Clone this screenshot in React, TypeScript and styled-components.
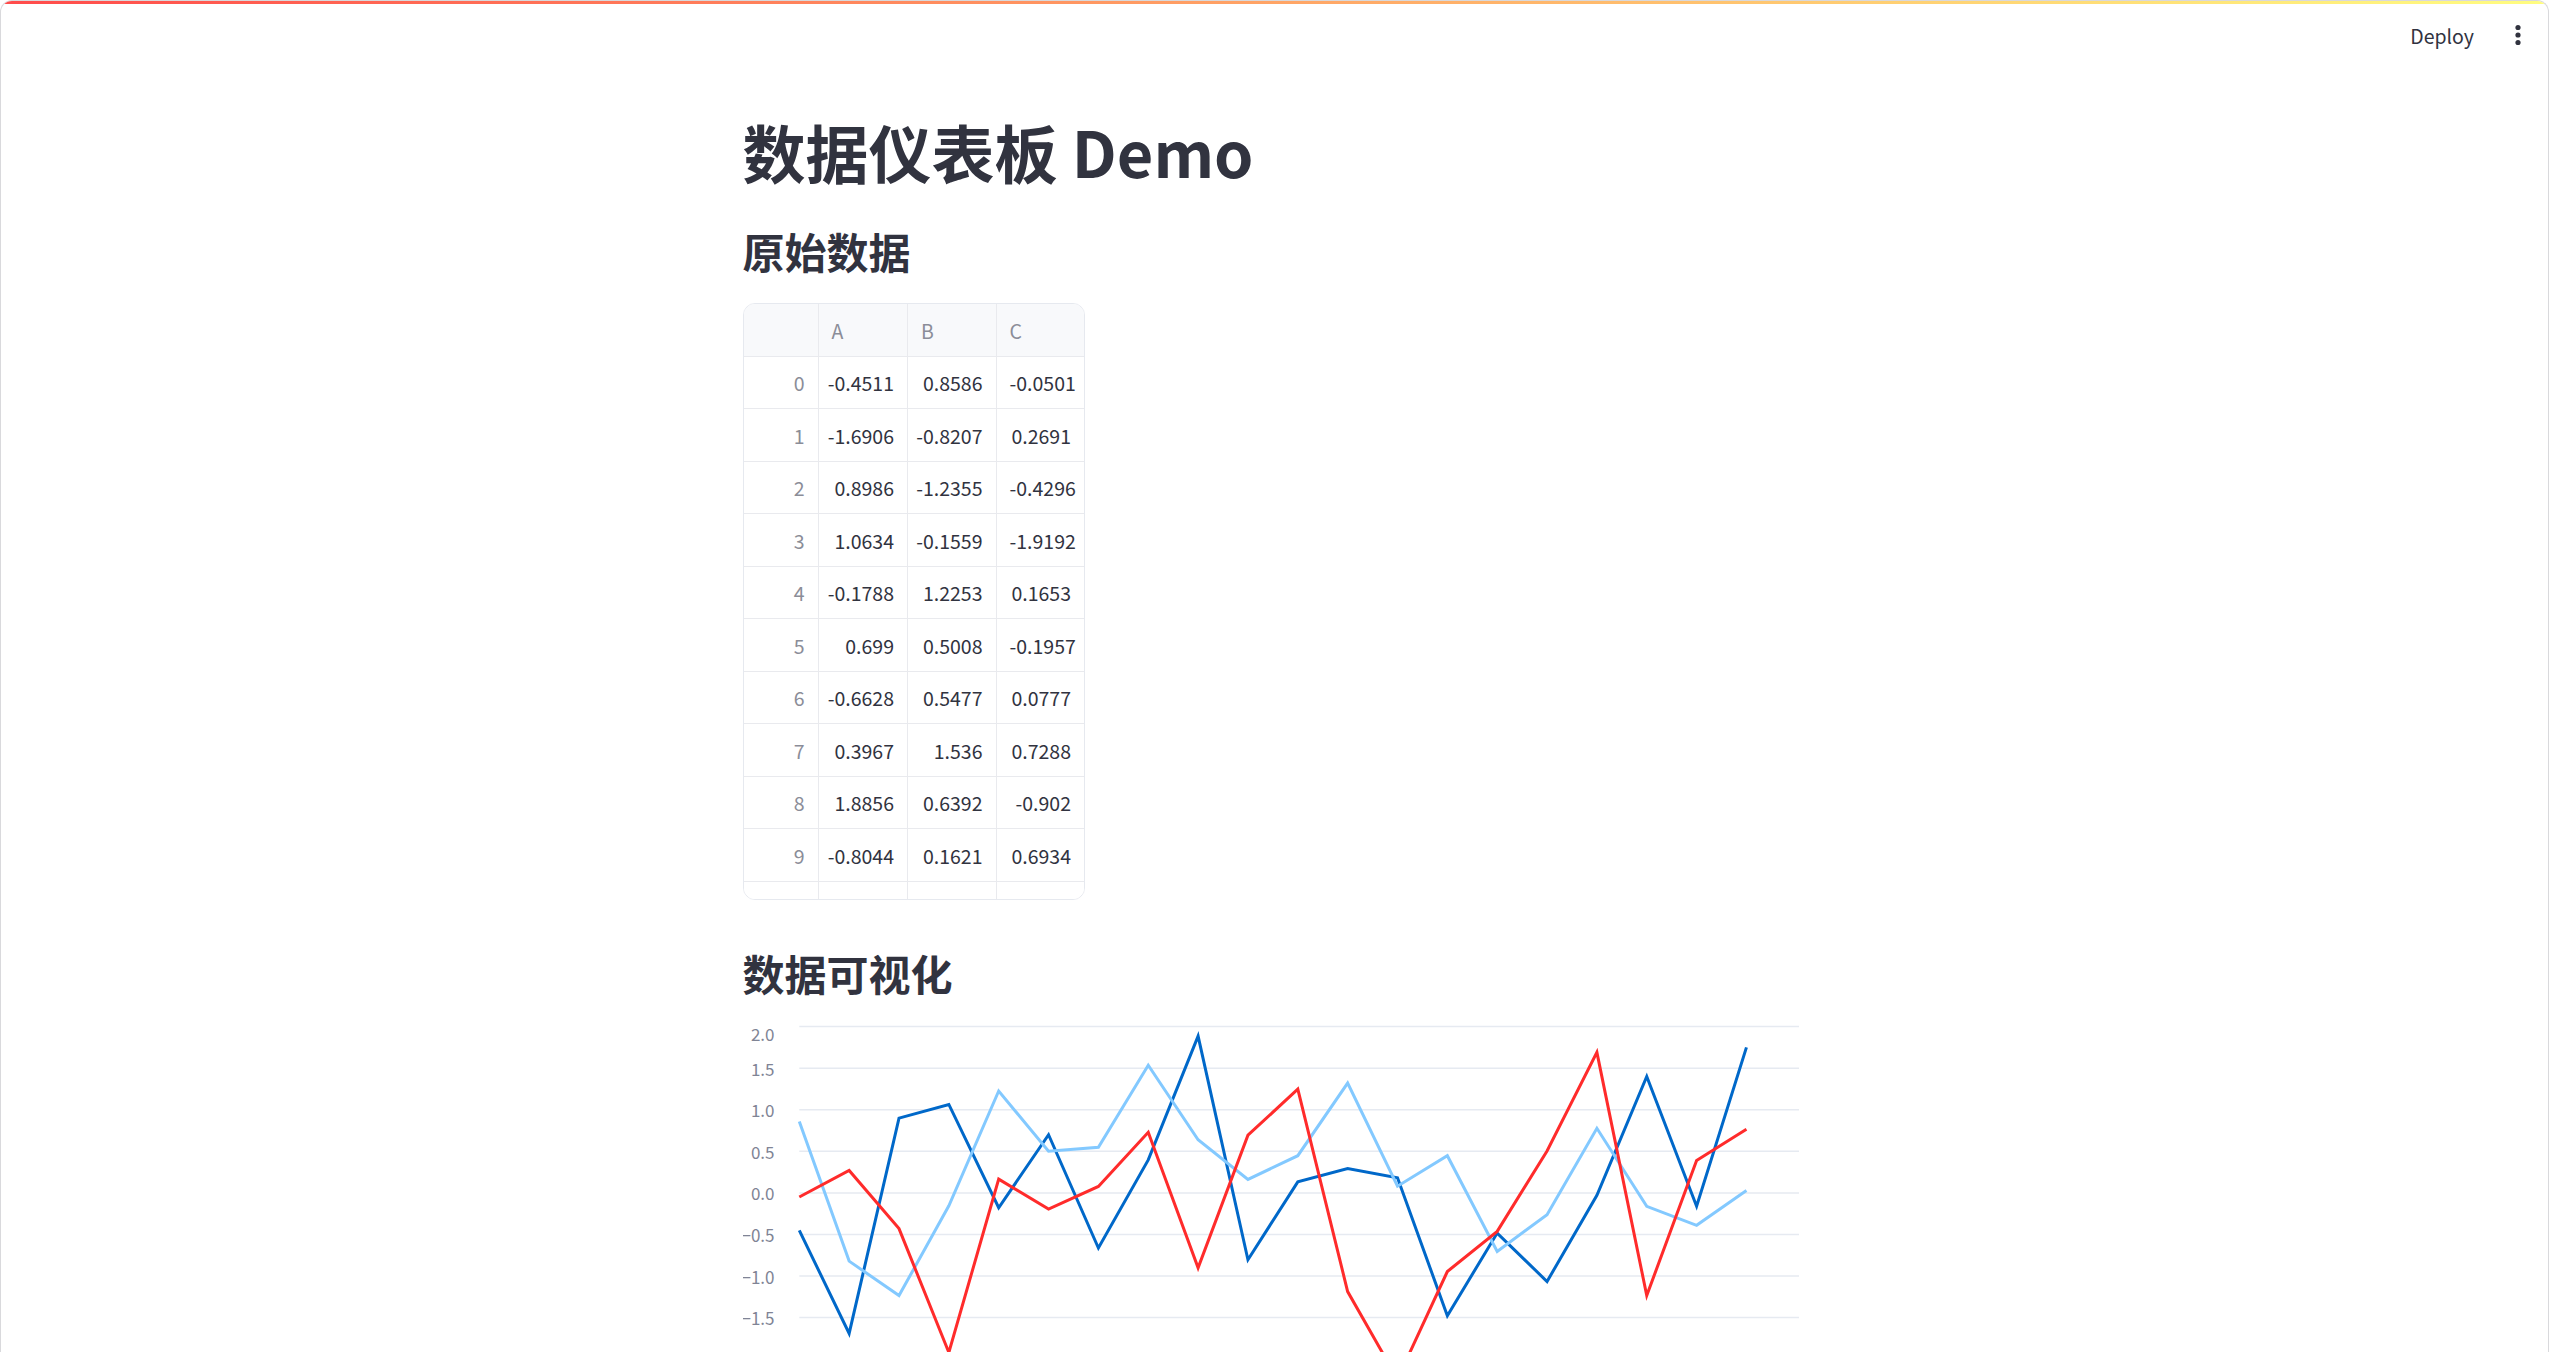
import styled, {createGlobalStyle} from 'styled-components';

const GlobalStyle = createGlobalStyle`
	html, body {
		margin: 0;
		padding: 0;
		background: #ffffff;
		overflow: hidden;
	}
	body {
		font-family: "Noto Sans CJK SC", "Noto Sans", sans-serif;
		color: #31333f;
	}
`;

// values read from the table / chart (rows 10-19 only show in the chart)
const colA = [-0.4511, -1.6906, 0.8986, 1.0634, -0.1788, 0.699, -0.6628, 0.3967, 1.8856, -0.8044, 0.133, 0.2941, 0.1812, -1.4771, -0.4832, -1.0662, -0.0281, 1.4002, -0.1613, 1.7497];
const colB = [0.8586, -0.8207, -1.2355, -0.1559, 1.2253, 0.5008, 0.5477, 1.536, 0.6392, 0.1621, 0.4472, 1.3204, 0.0805, 0.4469, -0.7041, -0.2622, 0.7771, -0.1614, -0.3903, 0.0282];
const colC = [-0.0501, 0.2691, -0.4296, -1.9192, 0.1653, -0.1957, 0.0777, 0.7288, -0.902, 0.6934, 1.2471, -1.1872, -2.2401, -0.9463, -0.4631, 0.5032, 1.6905, -1.2351, 0.3904, 0.7652];

const fmt = (v: number) => String(parseFloat(v.toFixed(4)));

const series = [
	{key: 'A', color: '#0068c9', data: colA},
	{key: 'B', color: '#83c9ff', data: colB},
	{key: 'C', color: '#ff2b2b', data: colC},
];

// the table frame only has room for the header, ten rows and a sliver of the 11th
const VISIBLE_ROWS = 11;

// chart geometry
const CHART_W = 1056;
const CHART_H = 600;
const PLOT_LEFT = 56.3;
const PLOT_TOP = 28.6;
const STEP_X = 49.85;
const UNIT_Y = 83.14;
const yOf = (v: number) => PLOT_TOP + (2 - v) * UNIT_Y;
const xOf = (i: number) => PLOT_LEFT + i * STEP_X;
const ticks = [2, 1.5, 1, 0.5, 0, -0.5, -1, -1.5, -2];
const tickLabel = (t: number) => (t < 0 ? '\u2212' + Math.abs(t).toFixed(1) : t.toFixed(1));

function DotsIcon() {
	return (
		<svg width="30" height="30" viewBox="0 0 30 30">
			<circle cx="15" cy="7.5" r="2.6" fill="#31333f" />
			<circle cx="15" cy="15" r="2.6" fill="#31333f" />
			<circle cx="15" cy="22.5" r="2.6" fill="#31333f" />
		</svg>
	);
}

function LineChart() {
	return (
		<ChartSvg width={CHART_W} height={CHART_H} viewBox={`0 0 ${CHART_W} ${CHART_H}`}>
			{ticks.map((t) => (
				<line key={'g' + t} x1={PLOT_LEFT} x2={CHART_W} y1={yOf(t)} y2={yOf(t)} stroke="#e6eaf1" strokeWidth={1.5} />
			))}
			{ticks.map((t) => (
				<text
					key={'l' + t}
					x={31.5}
					y={yOf(t) + (t === 2 ? 6.5 : 0)}
					textAnchor="end"
					dominantBaseline="central"
					fontSize={17}
					fill="#808495"
				>
					{tickLabel(t)}
				</text>
			))}
			{series.map((s) => (
				<polyline
					key={s.key}
					points={s.data.map((v, i) => `${xOf(i)},${yOf(v)}`).join(' ')}
					fill="none"
					stroke={s.color}
					strokeWidth={3}
					strokeLinejoin="miter"
				/>
			))}
		</ChartSvg>
	);
}

export default function App() {
	return (
		<>
			<GlobalStyle />
			<Frame>
				<Decoration />
				<Header>
					<DeployButton>Deploy</DeployButton>
					<MenuButton>
						<DotsIcon />
					</MenuButton>
				</Header>
				<Main>
					<Title>数据仪表板 Demo</Title>
					<SubHeader $gap={37}>原始数据</SubHeader>
					<TableFrame>
						<Row>
							<Cell $kind="head" />
							{series.map((s) => (
								<Cell key={s.key} $kind="head">
									{s.key}
								</Cell>
							))}
						</Row>
						{colA.slice(0, VISIBLE_ROWS).map((_, i) => (
							<Row key={i}>
								<Cell $kind="index">{i}</Cell>
								{series.map((s) => (
									<Cell key={s.key} $kind="value">
										{fmt(s.data[i])}
									</Cell>
								))}
							</Row>
						))}
					</TableFrame>
					<SubHeader $gap={47.5}>数据可视化</SubHeader>
					<LineChart />
				</Main>
			</Frame>
		</>
	);
}

const Frame = styled.div`
	height: 100vh;
	box-sizing: border-box;
	border: 1px solid #d9d9dc;
	border-bottom: none;
	border-radius: 12px 12px 0 0;
	overflow: hidden;
	display: flex;
	flex-direction: column;
`;

const Decoration = styled.div`
	height: 3px;
	flex-shrink: 0;
	background: linear-gradient(90deg, #ff4b4b, #fffd80);
`;

const Header = styled.div`
	height: 62px;
	flex-shrink: 0;
	display: flex;
	align-items: center;
	justify-content: flex-end;
	padding-right: 15px;
	gap: 29px;
`;

const DeployButton = styled.span`
	font-size: 19.5px;
	color: #31333f;
`;

const MenuButton = styled.span`
	display: flex;
	width: 30px;
	height: 30px;
`;

const Main = styled.div`
	width: 1056px;
	padding-right: 8px;
	margin: 0 auto;
	display: flex;
	flex-direction: column;
	align-items: flex-start;
`;

const Title = styled.h1`
	margin: 47px 0 0;
	font-size: 63px;
	line-height: 1.2;
	font-weight: 700;
	color: #31333f;
`;

const SubHeader = styled.h3<{$gap: number}>`
	margin: ${(p) => p.$gap}px 0 0;
	font-size: 42px;
	line-height: 1.2;
	font-weight: 700;
	color: #31333f;
`;

const TableFrame = styled.div`
	margin-top: 27.5px;
	width: 342.5px;
	height: 597px;
	box-sizing: border-box;
	border: 1.5px solid #e6e9ef;
	border-radius: 12px;
	overflow: hidden;
`;

const Row = styled.div`
	display: grid;
	grid-template-columns: 75px 89.5px 88.5px 1fr;
`;

const Cell = styled.div<{$kind: 'head' | 'index' | 'value'}>`
	height: 52.5px;
	box-sizing: border-box;
	border-bottom: 1.5px solid #e9eaee;
	border-right: 1.5px solid #e9eaee;
	padding: 0 13px;
	display: flex;
	align-items: center;
	justify-content: ${(p) => (p.$kind === 'head' ? 'flex-start' : 'flex-end')};
	font-size: 19.5px;
	color: ${(p) => (p.$kind === 'value' ? '#31333f' : '#8b8d98')};
	background: ${(p) => (p.$kind === 'head' ? '#f8f9fb' : '#ffffff')};
	white-space: nowrap;

	&:last-child {
		border-right: none;
	}
`;

const ChartSvg = styled.svg`
	display: block;
	flex-shrink: 0;
	font-family: "Noto Sans CJK SC", "Noto Sans", sans-serif;
`;
